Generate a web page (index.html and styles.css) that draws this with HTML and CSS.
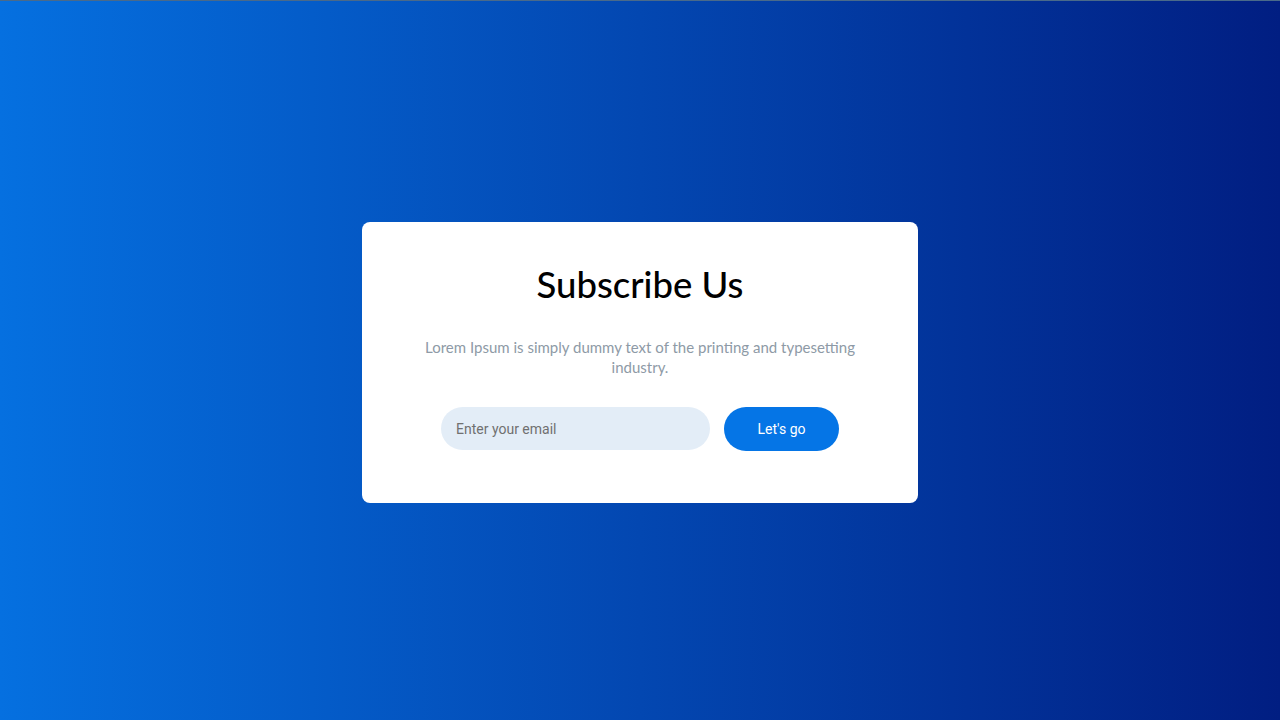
FILE: index.html
```html
<!DOCTYPE html>
<html lang="en">
<head>
<meta charset="utf-8">
<title>Subscribe Us</title>
<link rel="stylesheet" href="styles.css">
</head>
<body>
<main class="card">
  <h1 class="title">Subscribe Us</h1>
  <p class="desc">Lorem Ipsum is simply dummy text of the printing and typesetting industry.</p>
  <form class="form">
    <input class="email" type="email" placeholder="Enter your email">
    <button class="btn" type="button">Let's go</button>
  </form>
</main>
</body>
</html>
```

FILE: styles.css
```css
html, body {
  margin: 0;
  padding: 0;
  height: 100%;
}
body {
  display: flex;
  align-items: center;
  justify-content: center;
  background: linear-gradient(to right, #0570e0, #011e82);
  font-family: "Lato", "Noto Sans", sans-serif;
  border-top: 1px solid #4a6a8a;
  box-sizing: border-box;
}
.card {
  width: 556px;
  box-sizing: border-box;
  background: #fff;
  border-radius: 8px;
  padding: 40px 60px 52px;
  text-align: center;
  margin-top: 4px;
}
.title {
  margin: 0;
  font-size: 36.5px;
  line-height: 44px;
  font-weight: 500;
  color: #000;
}
.desc {
  margin: 31px auto 0;
  max-width: 436px;
  font-size: 15px;
  line-height: 20px;
  color: #8e9aa6;
}
.form {
  margin-top: 30px;
  display: flex;
  justify-content: center;
  gap: 14px;
}
.email {
  width: 269px;
  height: 43px;
  box-sizing: border-box;
  border: none;
  outline: none;
  border-radius: 22px;
  background: #e3edf7;
  padding: 0 15px;
  font-family: "Roboto", "Liberation Sans", sans-serif;
  font-size: 14px;
  color: #333;
}
.email::placeholder {
  color: #707070;
}
.btn {
  width: 115px;
  height: 44px;
  border: none;
  border-radius: 22px;
  background: #0575e6;
  color: #fff;
  font-family: "Roboto", "Liberation Sans", sans-serif;
  font-size: 14px;
  cursor: pointer;
}
```
